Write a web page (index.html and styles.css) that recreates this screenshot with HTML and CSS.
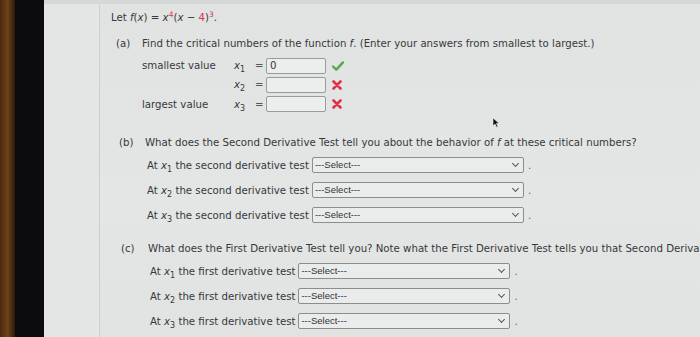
FILE: index.html
```html
<!DOCTYPE html>
<html lang="en">
<head>
<meta charset="utf-8">
<title>Critical numbers</title>
<link rel="stylesheet" href="styles.css">
</head>
<body>
<div class="photo">
  <div class="wood"></div>
  <div class="bezel"></div>
  <div class="screen">
    <div class="gutter"></div>
    <main class="content">
      <p class="intro">Let <i>f</i>(<i>x</i>) = <i>x</i><sup class="red">4</sup>(<i>x</i> &minus; <span class="red">4</span>)<sup class="red">3</sup>.</p>

      <section class="part part-a">
        <span class="tag">(a)</span>
        <div class="body">
          <p class="q">Find the critical numbers of the function <i>f</i>. (Enter your answers from smallest to largest.)</p>
          <div class="crit-row">
            <span class="crit-label">smallest value</span>
            <span class="var"><i>x</i><sub>1</sub></span>
            <span class="eq">=</span>
            <span class="box">0</span>
            <svg class="mark" viewBox="0 0 12 10" width="12" height="10"><path d="M1 5.5 L4.3 8.6 L11 1.4" fill="none" stroke="#5aa64a" stroke-width="2.4" stroke-linecap="round" stroke-linejoin="round"/></svg>
          </div>
          <div class="crit-row">
            <span class="crit-label"></span>
            <span class="var"><i>x</i><sub>2</sub></span>
            <span class="eq">=</span>
            <span class="box"></span>
            <svg class="mark" viewBox="0 0 10 10" width="10" height="10"><path d="M1.5 1.5 L8.5 8.5 M8.5 1.5 L1.5 8.5" fill="none" stroke="#e0304a" stroke-width="2.6" stroke-linecap="round"/></svg>
          </div>
          <div class="crit-row">
            <span class="crit-label">largest value</span>
            <span class="var"><i>x</i><sub>3</sub></span>
            <span class="eq">=</span>
            <span class="box"></span>
            <svg class="mark" viewBox="0 0 10 10" width="10" height="10"><path d="M1.5 1.5 L8.5 8.5 M8.5 1.5 L1.5 8.5" fill="none" stroke="#e0304a" stroke-width="2.6" stroke-linecap="round"/></svg>
          </div>
        </div>
      </section>

      <section class="part part-b">
        <span class="tag">(b)</span>
        <div class="body">
          <p class="q">What does the Second Derivative Test tell you about the behavior of <i>f</i> at these critical numbers?</p>
          <div class="sel-row"><span class="sel-label">At <i>x</i><sub>1</sub> the second derivative test</span><span class="select">---Select---<span class="chev"></span></span><span class="dot">.</span></div>
          <div class="sel-row"><span class="sel-label">At <i>x</i><sub>2</sub> the second derivative test</span><span class="select">---Select---<span class="chev"></span></span><span class="dot">.</span></div>
          <div class="sel-row"><span class="sel-label">At <i>x</i><sub>3</sub> the second derivative test</span><span class="select">---Select---<span class="chev"></span></span><span class="dot">.</span></div>
        </div>
      </section>

      <section class="part part-c">
        <span class="tag">(c)</span>
        <div class="body">
          <p class="q clip">What does the First Derivative Test tell you? Note what the First Derivative Test tells you that Second Derivative Test does not.</p>
          <div class="sel-row"><span class="sel-label">At <i>x</i><sub>1</sub> the first derivative test</span><span class="select">---Select---<span class="chev"></span></span><span class="dot">.</span></div>
          <div class="sel-row"><span class="sel-label">At <i>x</i><sub>2</sub> the first derivative test</span><span class="select">---Select---<span class="chev"></span></span><span class="dot">.</span></div>
          <div class="sel-row"><span class="sel-label">At <i>x</i><sub>3</sub> the first derivative test</span><span class="select">---Select---<span class="chev"></span></span><span class="dot">.</span></div>
        </div>
      </section>

      <svg class="cursor" viewBox="0 0 8 11" width="8" height="11"><path d="M1 1 L1 9 L3 7 L4.6 10.2 L6 9.5 L4.4 6.4 L7 6.2 Z" fill="#111" stroke="#eee" stroke-width="0.6"/></svg>
    </main>
  </div>
</div>
</body>
</html>
```

FILE: styles.css
```css
* { box-sizing: border-box; }
html, body {
  margin: 0;
  padding: 0;
  width: 700px;
  height: 337px;
  overflow: hidden;
}
body {
  font-family: "DejaVu Sans", Verdana, sans-serif;
  font-size: 10.2px;
  color: #36383a;
  background: #e2e4e3;
}
.photo {
  display: flex;
  height: 337px;
}
.wood {
  width: 15px;
  flex: none;
  background: linear-gradient(90deg, #4a2a10, #6e4219 50%, #2e1a08);
}
.bezel {
  width: 29px;
  flex: none;
  background: #0c0c0e;
}
.screen {
  flex: 1;
  display: flex;
  background: linear-gradient(180deg, #e1e3e2, #e3e6e5 60%, #e0e3e2);
  border-top: 4px solid #d6d8d8;
  min-width: 0;
}
.gutter {
  width: 56px;
  flex: none;
  border-right: 1px solid #cdd0cf;
  background: #e4e6e6;
}
.content {
  position: relative;
  flex: 1;
  padding: 7px 0 0 11px;
  min-width: 0;
  overflow: hidden;
}
p { margin: 0; }
.intro {
  line-height: 14px;
  height: 14px;
}
.red { color: #d8334a; }
sup {
  font-size: 7.5px;
  vertical-align: 4px;
  line-height: 0;
}
sub {
  font-size: 8px;
  vertical-align: -3px;
  line-height: 0;
}
.part {
  display: flex;
}
.tag {
  flex: none;
  width: 26px;
  line-height: 14px;
}
.body { flex: 1; min-width: 0; }
.q {
  line-height: 14px;
  height: 14px;
}
.clip {
  white-space: nowrap;
  overflow: hidden;
}

.part-a { margin-top: 12px; padding-left: 5px; }
.part-a .q { margin-bottom: 5px; }
.crit-row {
  display: flex;
  align-items: center;
  height: 19.3px;
}
.crit-label {
  width: 92px;
  flex: none;
}
.var {
  width: 21px;
  flex: none;
}
.eq {
  width: 11px;
  flex: none;
  color: #555;
}
.box {
  width: 60px;
  height: 16px;
  flex: none;
  border: 1px solid #9a9c9c;
  border-radius: 2px;
  background: #eceeed;
  padding: 1px 0 0 3px;
  line-height: 12px;
}
.mark { margin-left: 6px; flex: none; }

.part-b { margin-top: 22px; padding-left: 8px; }
.part-b .q { margin-bottom: 3px; }
.part-c { margin-top: 14px; padding-left: 10px; }
.part-c .q { margin-bottom: 3px; }
.part-c .tag { width: 27px; }

.sel-row {
  display: flex;
  align-items: center;
  height: 25px;
  padding-left: 2px;
}
.sel-label {
  flex: none;
  margin-right: 3px;
}
.select {
  position: relative;
  flex: none;
  width: 212px;
  height: 16px;
  border: 1px solid #8c8e8e;
  border-radius: 2px;
  background: #eaecec;
  font-family: "Liberation Sans", Arial, sans-serif;
  font-size: 9.5px;
  color: #303236;
  line-height: 14px;
  padding-left: 2px;
}
.chev {
  position: absolute;
  right: 5px;
  top: 3px;
  width: 5px;
  height: 5px;
  border-right: 1.2px solid #555;
  border-bottom: 1.2px solid #555;
  transform: rotate(45deg);
}
.dot {
  margin-left: 4px;
  color: #666;
}
.cursor {
  position: absolute;
  left: 392px;
  top: 113px;
}
```
